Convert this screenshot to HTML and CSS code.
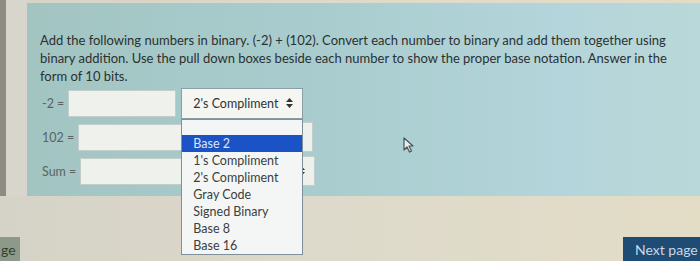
FILE: index.html
```html
<!DOCTYPE html>
<html>
<head>
    <title>Binary Addition Question</title>
    <link rel="stylesheet" href="styles.css">
</head>
<body>
    <div class="screen">
        <div class="stage">
            <div class="rail"></div>
            <div class="gutter"></div>
            <div class="panel">
                <p class="question">Add the following numbers in binary. (-2) + (102). Convert each number to binary and add them together using<br>binary addition. Use the pull down boxes beside each number to show the proper base notation. Answer in the<br>form of 10 bits.</p>

                <div class="row">
                    <span class="label">-2 =</span>
                    <span class="field"></span>
                    <div class="select focused">
                        <span class="select-text">2's Compliment</span>
                        <svg class="updown" width="7" height="10" viewBox="0 0 7 10"><path d="M3.5 0 L7 4 L0 4 Z M0 6 L7 6 L3.5 10 Z" fill="#333"/></svg>
                        <!-- lista aberta -->
                        <ul class="options">
                            <li class="blank"></li>
                            <li class="picked">Base 2</li>
                            <li>1's Compliment</li>
                            <li>2's Compliment</li>
                            <li>Gray Code</li>
                            <li>Signed Binary</li>
                            <li>Base 8</li>
                            <li>Base 16</li>
                        </ul>
                    </div>
                </div>

                <div class="row">
                    <span class="label">102 =</span>
                    <span class="field"></span>
                    <div class="select">
                        <span class="select-text"></span>
                        <svg class="updown" width="7" height="10" viewBox="0 0 7 10"><path d="M3.5 0 L7 4 L0 4 Z M0 6 L7 6 L3.5 10 Z" fill="#333"/></svg>
                    </div>
                </div>

                <div class="row">
                    <span class="label">Sum =</span>
                    <span class="field"></span>
                    <div class="select">
                        <span class="select-text"></span>
                        <svg class="updown" width="7" height="10" viewBox="0 0 7 10"><path d="M3.5 0 L7 4 L0 4 Z M0 6 L7 6 L3.5 10 Z" fill="#333"/></svg>
                    </div>
                </div>
            </div>
        </div>

        <div class="footer">
            <button class="prev">ge</button>
            <button class="next">Next page</button>
        </div>

        <svg class="cursor" width="11" height="16" viewBox="0 0 11 16"><path d="M1 1 L1 13 L4 10 L6.5 15 L8.5 14 L6 9 L10 9 Z" fill="#e6eef0" stroke="#4a5256" stroke-width="1.2" stroke-linejoin="round"/></svg>
    </div>
</body>
</html>
```

FILE: styles.css
```css
/* Tela da questão, cores tiradas da foto */
body {
    margin: 0;
    font-family: Lato, 'Open Sans', sans-serif;
    color: #2b3031;
}

.screen {
    position: relative;
    width: 700px;
    height: 261px;
    overflow: hidden;
    display: flex;
    flex-direction: column;
    background: linear-gradient(90deg, #d5d3c7, #dedacb 50%, #e3ddc6);
}

.stage {
    display: flex;
    height: 196px;
}

.rail {
    flex-shrink: 0;
    width: 6px;
    background-color: #8e8c80;
}

.gutter {
    flex-shrink: 0;
    width: 21px;
    background-color: #d8d6cc;
}

.panel {
    flex: 1;
    min-width: 0;
    margin-top: 3px;
    padding: 28px 0 0 13px;
    background: linear-gradient(90deg, #a2c5c2, #a9cdcf 45%, #b4d5db 80%, #b9d8d8);
}

.question {
    margin: 0 0 3px 0;
    font-size: 13px;
    line-height: 18px;
    white-space: nowrap;
}

.row {
    display: flex;
    align-items: center;
    height: 30px;
    margin-bottom: 4px;
}

.label {
    font-size: 12.5px;
    color: #5b6364;
    padding-left: 2px;
    margin-right: 4px;
}

.field {
    width: 108px;
    height: 27px;
    background-color: #eff1ec;
    border: 1px solid #c3cdca;
    box-sizing: border-box;
}

.select {
    position: relative;
    width: 122px;
    height: 30px;
    margin-left: 5px;
    display: flex;
    align-items: center;
    justify-content: space-between;
    padding: 0 9px 0 11px;
    box-sizing: border-box;
    background-color: #eef0eb;
    border: 1px solid #c3cdca;
    font-size: 12.5px;
}

.select.focused {
    height: 31px;
    background-color: #f5f6f2;
    border-color: #8a9ea6;
}

.select-text {
    color: #2e3334;
}

.options {
    position: absolute;
    top: 30px;
    left: -1px;
    width: 122px;
    margin: 0;
    padding: 0;
    list-style: none;
    background-color: #f4f6f5;
    border: 1px solid #7f8f9c;
    box-sizing: border-box;
    z-index: 2;
}

.options li {
    height: 17px;
    line-height: 17px;
    padding-left: 11px;
    font-size: 12.5px;
    color: #3a3f40;
}

.options li.blank {
    height: 15px;
}

.options li.picked {
    background-color: #1b52c6;
    color: #dfe6f7;
}

.footer {
    margin-top: auto;
    display: flex;
    justify-content: space-between;
    align-items: flex-end;
    height: 24px;
}

.prev, .next {
    border: none;
    height: 24px;
    font-family: Lato, 'Open Sans', sans-serif;
    font-size: 14px;
    padding: 0;
}

.prev {
    width: 20px;
    text-align: left;
    padding-left: 1px;
    background-color: #8d9a8a;
    color: #34402f;
}

.next {
    width: 77px;
    padding-left: 12px;
    text-align: left;
    background-color: #1e4c74;
    color: #c9d8e6;
}

.cursor {
    position: absolute;
    left: 403px;
    top: 137px;
}
```
